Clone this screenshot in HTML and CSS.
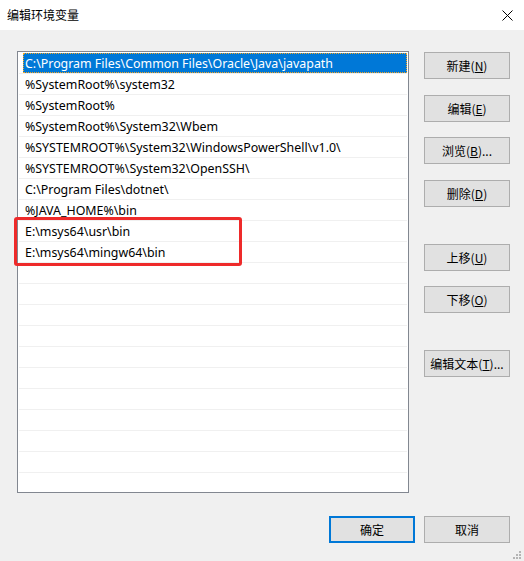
FILE: index.html
```html
<!DOCTYPE html>
<html lang="zh-CN">
<head>
<meta charset="utf-8">
<title>编辑环境变量</title>
<link rel="stylesheet" href="styles.css">
</head>
<body>
<div class="dialog">
  <div class="titlebar">
    <span class="title">编辑环境变量</span>
    <svg class="close" width="11" height="11" viewBox="0 0 11 11"><path d="M0.5 0.5 L10.5 10.5 M10.5 0.5 L0.5 10.5" stroke="#000" stroke-width="1" fill="none"/></svg>
  </div>
  <div class="content">
    <div class="listwrap">
      <div class="list">
        <div class="row"><span class="item selected">C:\Program Files\Common Files\Oracle\Java\javapath</span></div>
        <div class="row"><span class="item">%SystemRoot%\system32</span></div>
        <div class="row"><span class="item">%SystemRoot%</span></div>
        <div class="row"><span class="item">%SystemRoot%\System32\Wbem</span></div>
        <div class="row"><span class="item">%SYSTEMROOT%\System32\WindowsPowerShell\v1.0\</span></div>
        <div class="row"><span class="item">%SYSTEMROOT%\System32\OpenSSH\</span></div>
        <div class="row"><span class="item">C:\Program Files\dotnet\</span></div>
        <div class="row"><span class="item">%JAVA_HOME%\bin</span></div>
        <div class="row"><span class="item">E:\msys64\usr\bin</span></div>
        <div class="row"><span class="item">E:\msys64\mingw64\bin</span></div>
        <div class="row"></div>
        <div class="row"></div>
        <div class="row"></div>
        <div class="row"></div>
        <div class="row"></div>
        <div class="row"></div>
        <div class="row"></div>
        <div class="row"></div>
        <div class="row"></div>
        <div class="row"></div>
        <div class="row"></div>
      </div>
      <div class="highlight"></div>
    </div>
    <div class="side">
      <button class="btn">新建(<u>N</u>)</button>
      <button class="btn g16">编辑(<u>E</u>)</button>
      <button class="btn g15">浏览(<u>B</u>)...</button>
      <button class="btn g16">删除(<u>D</u>)</button>
      <button class="btn g37">上移(<u>U</u>)</button>
      <button class="btn g15">下移(<u>O</u>)</button>
      <button class="btn g37">编辑文本(<u>T</u>)...</button>
    </div>
  </div>
  <div class="footer">
    <button class="btn primary">确定</button>
    <button class="btn">取消</button>
  </div>
  <div class="grip">
    <i class="dot d1"></i><i class="dot d2"></i><i class="dot d3"></i><i class="dot d4"></i><i class="dot d5"></i><i class="dot d6"></i>
  </div>
</div>
</body>
</html>
```
FILE: styles.css
```css
html, body {
  margin: 0;
  padding: 0;
}
body {
  background: #f0f0f0;
  font-family: "Noto Sans", "Noto Sans CJK SC", sans-serif;
  font-size: 12px;
  color: #000;
}
.dialog {
  position: relative;
  width: 524px;
  height: 561px;
  overflow: hidden;
}
.titlebar {
  height: 30px;
  background: #fff;
  display: flex;
  align-items: center;
  justify-content: space-between;
  padding: 0 11px 0 7px;
}
.title {
  font-family: "Noto Sans CJK SC", sans-serif;
  font-size: 12px;
  line-height: 30px;
}
.close {
  display: block;
}
.content {
  display: flex;
  padding: 21px 0 0 17px;
}
.listwrap {
  position: relative;
}
.list {
  width: 392px;
  height: 442px;
  box-sizing: border-box;
  border: 1px solid #828790;
  background: #fff;
  padding: 1px;
  overflow: hidden;
}
.row {
  height: 20px;
  border-bottom: 1px solid #f0f0f0;
  display: flex;
}
.item {
  display: block;
  flex: 1;
  margin-left: 4px;
  padding-left: 2px;
  font-size: 12.4px;
  line-height: 21px;
  height: 20px;
  white-space: nowrap;
}
.item.selected {
  background: #0078d7;
  color: #fff;
  outline: 1px dotted #f5a623;
  outline-offset: -1px;
}
.highlight {
  position: absolute;
  left: -3px;
  top: 166px;
  width: 228px;
  height: 49px;
  box-sizing: border-box;
  border: 3px solid #ee2a2a;
  border-radius: 3px;
}
.side {
  display: flex;
  flex-direction: column;
  margin-left: 15px;
  padding-top: 1px;
}
.btn {
  width: 86px;
  height: 27px;
  box-sizing: border-box;
  background: #e1e1e1;
  border: 1px solid #adadad;
  font-family: "Noto Sans CJK SC", sans-serif;
  font-size: 12px;
  color: #000;
  padding: 0;
  line-height: 25px;
  margin: 0;
}
.btn u {
  text-underline-offset: 1px;
}
.g15 { margin-top: 15px; }
.g16 { margin-top: 16px; }
.g37 { margin-top: 37px; }
.footer {
  display: flex;
  justify-content: flex-end;
  gap: 9px;
  padding: 23px 14px 0 0;
}
.btn.primary {
  border: 2px solid #0078d7;
  line-height: 23px;
}
.grip {
  position: absolute;
  right: 0;
  bottom: 0;
  width: 11px;
  height: 10px;
}
.dot {
  position: absolute;
  width: 2px;
  height: 2px;
  background: #b4b4b4;
}
.d1 { left: 6px; top: 0; }
.d2 { left: 3px; top: 3px; }
.d3 { left: 6px; top: 3px; }
.d4 { left: 0; top: 6px; }
.d5 { left: 3px; top: 6px; }
.d6 { left: 6px; top: 6px; }
```
